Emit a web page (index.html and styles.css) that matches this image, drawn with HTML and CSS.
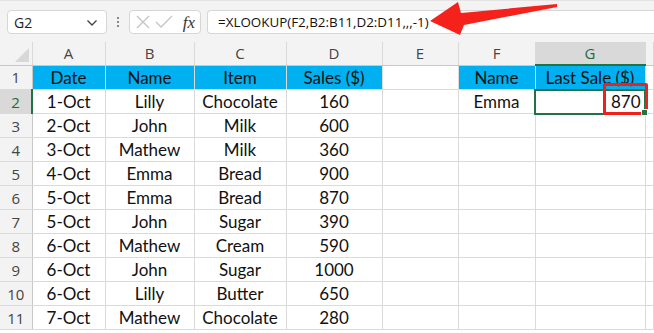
FILE: index.html
```html
<!DOCTYPE html>
<html lang="en">
<head>
  <meta charset="UTF-8" />
  <title>XLOOKUP last sale</title>
  <link rel="stylesheet" href="styles.css">
</head>
<body>
  <div class="toolbar">
    <div class="namebox">
      <span>G2</span>
      <svg class="chev" width="12" height="8" viewBox="0 0 12 8"><path d="M1.5 1.5 L6 6 L10.5 1.5" fill="none" stroke="#444" stroke-width="1.4"/></svg>
    </div>
    <div class="dots"><i></i><i></i><i></i></div>
    <div class="fxbox">
      <svg width="16" height="16" viewBox="0 0 16 16"><path d="M2 2 L14 14 M14 2 L2 14" stroke="#c4c4c4" stroke-width="1.3" fill="none"/></svg>
      <svg width="18" height="16" viewBox="0 0 18 16"><path d="M1 8 L6 13 L17 2" stroke="#c4c4c4" stroke-width="1.3" fill="none"/></svg>
      <span class="fx">fx</span>
    </div>
    <div class="formula">=XLOOKUP(F2,B2:B11,D2:D11,,,-1)</div>
    <svg class="arrow" width="654" height="42" viewBox="0 0 654 42">
      <polygon points="430,21 458,2 461,13 557,4 557,7 464,25 460,35" fill="#f5211b"/>
    </svg>
  </div>

  <table class="sheet">
    <colgroup>
      <col style="width:32px"><col style="width:73px"><col style="width:89px"><col style="width:92px">
      <col style="width:96px"><col style="width:76px"><col style="width:77px"><col style="width:110px"><col>
    </colgroup>
    <tr class="colhead">
      <th class="corner"><span class="tri"></span></th>
      <th>A</th><th>B</th><th>C</th><th>D</th><th>E</th><th>F</th><th class="sel-col">G</th><th></th>
    </tr>
    <tr>
      <th class="rowhead">1</th>
      <td class="hd">Date</td><td class="hd">Name</td><td class="hd">Item</td><td class="hd">Sales ($)</td>
      <td></td><td class="hd">Name</td><td class="hd">Last Sale ($)</td><td></td>
    </tr>
    <tr>
      <th class="rowhead sel-row">2</th>
      <td>1-Oct</td><td>Lilly</td><td>Chocolate</td><td>160</td>
      <td></td><td>Emma</td><td class="active">870<span class="mark"></span><span class="handle"></span></td><td></td>
    </tr>
    <tr><th class="rowhead">3</th><td>2-Oct</td><td>John</td><td>Milk</td><td>600</td><td></td><td></td><td></td><td></td></tr>
    <tr><th class="rowhead">4</th><td>3-Oct</td><td>Mathew</td><td>Milk</td><td>360</td><td></td><td></td><td></td><td></td></tr>
    <tr><th class="rowhead">5</th><td>4-Oct</td><td>Emma</td><td>Bread</td><td>900</td><td></td><td></td><td></td><td></td></tr>
    <tr><th class="rowhead">6</th><td>5-Oct</td><td>Emma</td><td>Bread</td><td>870</td><td></td><td></td><td></td><td></td></tr>
    <tr><th class="rowhead">7</th><td>5-Oct</td><td>John</td><td>Sugar</td><td>390</td><td></td><td></td><td></td><td></td></tr>
    <tr><th class="rowhead">8</th><td>6-Oct</td><td>Mathew</td><td>Cream</td><td>590</td><td></td><td></td><td></td><td></td></tr>
    <tr><th class="rowhead">9</th><td>6-Oct</td><td>John</td><td>Sugar</td><td>1000</td><td></td><td></td><td></td><td></td></tr>
    <tr><th class="rowhead">10</th><td>6-Oct</td><td>Lilly</td><td>Butter</td><td>650</td><td></td><td></td><td></td><td></td></tr>
    <tr><th class="rowhead">11</th><td>7-Oct</td><td>Mathew</td><td>Chocolate</td><td>280</td><td></td><td></td><td></td><td></td></tr>
  </table>
</body>
</html>
```

FILE: styles.css
```css
body {
  margin: 0;
  background: #fff;
  font-family: Lato, "Open Sans", sans-serif;
  overflow: hidden;
}

.toolbar {
  position: relative;
  height: 42px;
  background: #f3f3f3;
  border-top: 1px solid #e4e4e4;
  box-sizing: border-box;
  display: flex;
  align-items: flex-start;
  padding: 9px 0 0 7px;
}
.namebox {
  width: 100px;
  height: 24px;
  box-sizing: border-box;
  background: #fff;
  border: 1px solid #d6d6d6;
  border-radius: 4px;
  display: flex;
  align-items: center;
  justify-content: space-between;
  padding: 0 8px 0 6px;
  font-family: "Open Sans", sans-serif;
  font-size: 14px;
  color: #222;
}
.namebox .chev {
  margin-top: 1px;
}
.dots {
  width: 22px;
  height: 24px;
  display: flex;
  flex-direction: column;
  align-items: center;
  justify-content: center;
  gap: 2px;
}
.dots i {
  width: 2px;
  height: 2px;
  background: #888;
}
.fxbox {
  width: 72px;
  height: 24px;
  box-sizing: border-box;
  background: #fff;
  border: 1px solid #d6d6d6;
  border-radius: 4px;
  display: flex;
  align-items: center;
  padding: 0 5px;
  gap: 4px;
}
.fxbox .fx {
  margin-left: auto;
  font-family: "Liberation Serif", serif;
  font-style: italic;
  font-size: 17px;
  color: #333;
  line-height: 1;
}
.formula {
  margin-left: 6px;
  flex: 1;
  height: 24px;
  box-sizing: border-box;
  background: #fff;
  border: 1px solid #d6d6d6;
  border-right: none;
  border-radius: 4px 0 0 4px;
  padding: 0 0 0 10px;
  font-family: "Open Sans", sans-serif;
  font-size: 13.4px;
  line-height: 22px;
  color: #111;
}
.arrow {
  position: absolute;
  left: 0;
  top: -1px;
}

.sheet {
  border-collapse: collapse;
  table-layout: fixed;
  width: 654px;
  font-size: 17px;
  color: #111;
}
.sheet th,
.sheet td {
  height: 23px;
  padding: 0;
  border-right: 1px solid #dadada;
  border-bottom: 1px solid #dadada;
  text-align: center;
  white-space: nowrap;
  overflow: hidden;
}
.colhead th {
  height: 22px;
  background: #f3f3f3;
  font-weight: normal;
  font-family: "Open Sans", sans-serif;
  font-size: 15px;
  color: #444;
  border-bottom: 1px solid #c8c8c8;
}
.colhead th.sel-col {
  background: #d9d9d9;
  color: #1e6b41;
  border-bottom: 2px solid #217346;
}
.corner {
  position: relative;
}
.tri {
  position: absolute;
  right: 3px;
  bottom: 3px;
  width: 0;
  height: 0;
  border-left: 14px solid transparent;
  border-bottom: 14px solid #d8d8d8;
}
.sheet .rowhead {
  background: #f3f3f3;
  font-weight: normal;
  font-family: "Open Sans", sans-serif;
  font-size: 15px;
  color: #444;
  border-right: 1px solid #c8c8c8;
}
.sheet .rowhead.sel-row {
  background: #d9d9d9;
  color: #1e6b41;
  border-right: 2px solid #217346;
}
.hd {
  background: #00b0f0;
}
.sheet td.active {
  position: relative;
  text-align: right;
  padding-right: 4px;
  outline: 2px solid #217346;
  outline-offset: -1px;
  overflow: visible;
}
.mark {
  position: absolute;
  right: -3px;
  top: -7px;
  width: 45px;
  height: 32px;
  box-sizing: border-box;
  border: 3px solid #f0201a;
  border-radius: 2px;
}
.handle {
  position: absolute;
  right: -3px;
  bottom: -3px;
  width: 5px;
  height: 5px;
  background: #217346;
  border: 1px solid #fff;
}
```
